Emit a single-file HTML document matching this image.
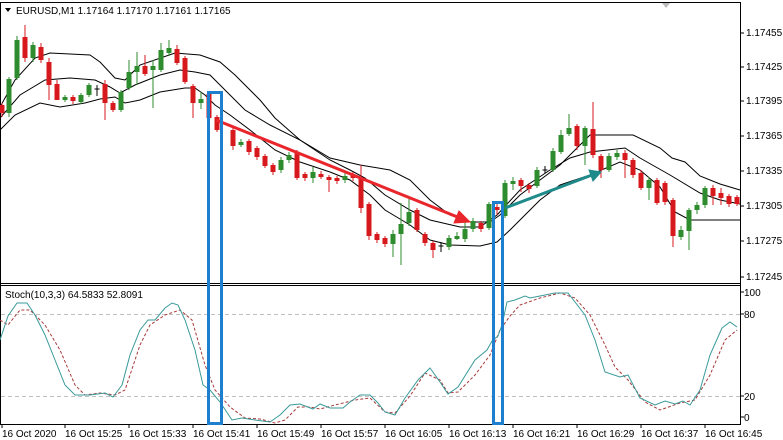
<!DOCTYPE html>
<html><head><meta charset="utf-8"><style>
html,body{margin:0;padding:0;background:#fff;width:783px;height:440px;overflow:hidden}
svg{display:block}
text{font-family:"Liberation Sans","DejaVu Sans",sans-serif;font-size:10px;fill:#000}
</style></head><body>
<svg width="783" height="440" viewBox="0 0 783 440" xmlns="http://www.w3.org/2000/svg">
<rect width="783" height="440" fill="#fff"/>
<path d="M0.5 2.5H740.5V424.5H0.5Z" fill="none" stroke="#000"/>
<path d="M0 283.5H741M0 285.5H741" stroke="#000"/>
<path d="M662 3l4 5 4-5z" fill="#bbb"/>
<path d="M740 33h4M740 67h4M740 101h4M740 136h4M740 171h4M740 206h4M740 241h4M740 277h4M740 292h4M740 314h4M740 396h4M740 417h4" stroke="#000"/>
<g>
<text x="746" y="36">1.17455</text><text x="746" y="70">1.17425</text><text x="746" y="104">1.17395</text><text x="746" y="139">1.17365</text><text x="746" y="174">1.17335</text><text x="746" y="209">1.17305</text><text x="746" y="244">1.17275</text><text x="746" y="280">1.17245</text>
<text x="744" y="296">100</text><text x="744" y="318">80</text><text x="744" y="400">20</text><text x="744" y="421">0</text>
</g>
<path d="M2 424v4M65 424v4M129 424v4M193 424v4M257 424v4M321 424v4M385 424v4M449 424v4M513 424v4M577 424v4M641 424v4M705 424v4" stroke="#000"/>
<g>
<text x="2" y="437">16 Oct 2020</text><text x="65" y="437">16 Oct 15:25</text><text x="129" y="437">16 Oct 15:33</text><text x="193" y="437">16 Oct 15:41</text><text x="257" y="437">16 Oct 15:49</text><text x="321" y="437">16 Oct 15:57</text><text x="385" y="437">16 Oct 16:05</text><text x="449" y="437">16 Oct 16:13</text><text x="513" y="437">16 Oct 16:21</text><text x="577" y="437">16 Oct 16:29</text><text x="641" y="437">16 Oct 16:37</text><text x="705" y="437">16 Oct 16:45</text>
</g>
<path d="M5 8h6l-3 4z" fill="#000"/>
<text x="16" y="14">EURUSD,M1  1.17164 1.17170 1.17161 1.17165</text>
<text x="5" y="298">Stoch(10,3,3) 64.5833 52.8091</text>
<g fill="none" stroke="#000" stroke-width="1">
<polyline points="0,107 15,80 35,58 50,53 90,55 100,62 115,78 125,80 140,65 175,53 200,55 220,62 235,75 260,100 275,118 300,140 330,158 360,165 390,170 410,180 430,200 450,215 470,222 490,222 500,215 520,195 560,165 590,135 633,135 660,148 672,158 685,162 700,176 720,184 740,190"/>
<polyline points="0,118 20,95 45,80 70,78 95,80 110,87 120,93 135,85 160,75 180,70 195,72 210,75 225,90 245,110 270,125 300,140 330,160 350,170 365,178 385,195 410,210 430,220 460,227 480,227 497,215 520,190 550,170 570,158 590,152 625,148 640,158 670,175 700,193 720,200 740,204"/>
<polyline points="0,130 15,115 40,103 60,107 85,103 100,99 115,97 125,103 140,100 160,92 185,88 195,88 205,95 215,105 230,115 250,130 275,150 300,162 330,172 350,180 370,195 385,210 410,225 430,240 450,245 480,246 497,242 510,230 540,200 560,185 590,175 620,162 640,170 660,187 675,212 690,220 740,220"/>
</g>
<g stroke="#2e8b2e" fill="none">
<path stroke-width="1" d="M9 77V117M17 36V80M33 42V62M65 95V102M81 93V104M89 83V97M121 90V112M129 60V90M137 52V85M153 60V108M161 43V72M169 40V56M201 92V109M241 139V147M281 157V173M289 152V163M313 167V183M345 173V183M393 230V257M401 203V265M409 197V226M449 235V250M457 232V240M465 218V242M473 218V232M489 202V230M505 180V218M513 177V190M537 167V188M553 148V172M561 130V154M569 114V136M585 126V165M609 153V172M617 150V160M649 177V200M681 226V240M689 208V250M697 202V214M705 186V208"/>
<path stroke-width="5" d="M9 79V113M17 40V78M33 45V58M65 97V100M81 95V102M89 85V95M121 92V110M129 72V88M137 66V72M153 66V70M161 50V70M169 48V53M201 99V103M241 142V145M281 160V170M289 155V160M313 172V178M345 176V180M393 234V244M401 224V234M409 212V223M449 238V247M457 236V239M465 229V239M473 221V229M489 204V228M505 183V216M513 181V184M537 170V186M553 151V170M561 135V152M569 128V134M585 128V146M609 156V170M617 153V157M649 180V188M681 230V237M689 210V231M697 205V210M705 188V205"/>
</g>
<g stroke="#d7191e" fill="none">
<path stroke-width="1" d="M2 103V117M25 25V62M41 43V63M49 58V100M57 80V100M73 95V104M105 80V120M113 101V112M145 55V76M177 45V65M185 56V84M193 84V118M209 92V120M217 115V132M233 128V150M249 139V155M257 146V160M265 154V168M273 163V175M297 150V180M305 172V181M321 171V179M329 175V192M337 176V184M353 172V181M361 165V213M369 202V240M377 232V243M385 236V247M417 208V232M425 232V246M433 241V258M481 221V232M497 203V215M521 178V192M529 183V193M577 124V150M593 102V158M601 154V178M625 150V178M633 158V178M641 170V190M657 178V205M665 181V205M673 198V247M713 185V205M721 188V205M729 194V207M737 195V206"/>
<path stroke-width="5" d="M2 105V113M25 37V58M41 47V60M49 62V85M57 84V100M73 97V101M105 84V103M113 103V110M145 66V74M177 49V63M185 58V82M193 86V103M209 94V118M217 117V130M233 130V146M249 141V152M257 148V157M265 156V166M273 165V172M297 153V178M305 174V178M321 174V177M329 177V180M337 178V181M353 175V178M361 178V208M369 204V236M377 234V240M385 238V244M417 210V230M425 234V243M433 243V250M481 223V229M497 207V210M521 180V186M529 185V189M577 126V146M593 129V155M601 156V170M625 153V160M633 160V175M641 173V188M657 180V203M665 183V202M673 200V236M713 188V196M721 193V198M729 196V204M737 197V204"/>
</g>
<path d="M97 85V96M94.5 89H99.5M441 242V252M438.5 246H443.5M545 166V173M542.5 170H547.5" stroke="#000"/>
<g stroke="#e8262b" stroke-width="3" fill="#e8262b">
<path d="M216 120L460 218" fill="none"/>
<path d="M470 222L454 223L459 211Z" stroke-width="1"/>
</g>
<g stroke="#1f8a8a" stroke-width="3" fill="#1f8a8a">
<path d="M505 208L592 175" fill="none"/>
<path d="M601 172L593 181L589 170Z" stroke-width="1"/>
</g>
<path d="M1 314.5H740M1 396.5H740" stroke="#c0c0c0" stroke-dasharray="4,3"/>
<polyline fill="none" stroke="#a83a3a" stroke-width="1" stroke-dasharray="3,2" points="0,320 8,325 20,310 30,310 45,325 60,350 75,385 85,395 100,393 115,395 125,390 140,345 150,325 165,315 180,310 192,320 205,365 215,390 230,407 245,418 260,419 275,423 285,420 298,407 310,407 320,409 335,405 355,400 370,398 385,412 395,413 410,396 425,373 440,380 448,393 458,392 475,375 490,355 500,330 510,316 520,305 540,298 560,293 575,298 590,315 605,345 615,367 628,380 645,402 660,410 680,403 695,400 710,375 725,340 737,330"/>
<polyline fill="none" stroke="#3a9a9a" stroke-width="1" points="0,340 8,316 17,303 27,303 35,315 45,335 55,360 65,385 75,395 90,395 105,393 113,397 122,385 130,355 140,330 148,320 155,320 165,308 172,303 178,305 185,320 195,350 203,385 210,390 220,402 232,420 242,418 255,420 270,422 280,415 290,405 300,404 313,409 320,404 330,408 343,408 350,402 360,395 370,395 378,403 385,412 395,415 405,398 418,380 430,368 440,382 448,394 458,387 475,360 487,350 492,341 498,336 502,325 507,302 515,300 525,296 530,298 540,296 555,293 568,293 575,302 585,315 595,340 605,372 620,377 628,375 640,398 655,405 665,401 675,404 683,401 690,405 700,390 710,355 722,328 730,322 737,327"/>
<g fill="none" stroke="#1f7fcf" stroke-width="3">
<rect x="208.5" y="92.5" width="13" height="331"/>
<rect x="493.5" y="202.5" width="9" height="221"/>
</g>
</svg>
</body></html>
